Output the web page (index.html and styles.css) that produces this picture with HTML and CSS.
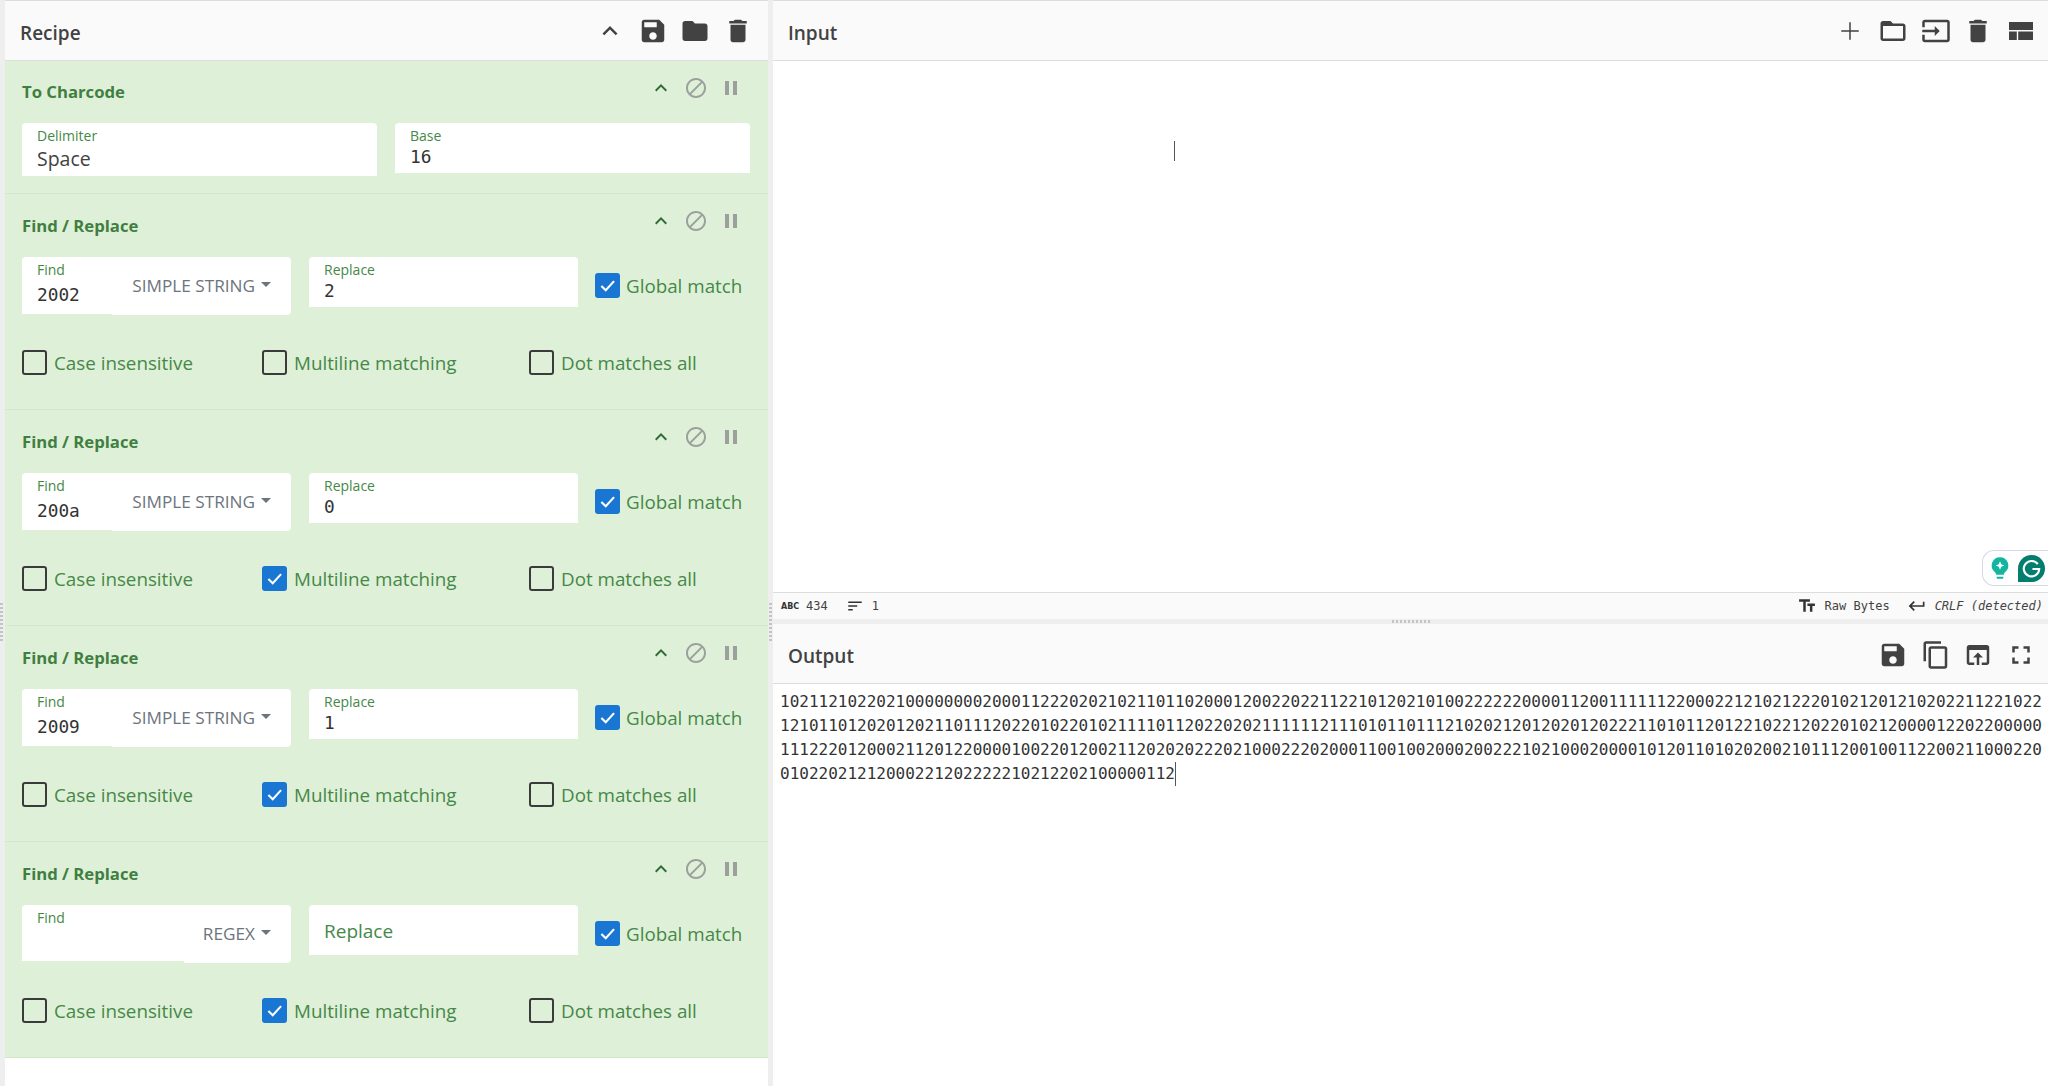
FILE: index.html
```html
<!DOCTYPE html>
<html lang="en">
<head>
<meta charset="utf-8">
<title>CyberChef</title>
<link rel="stylesheet" href="styles.css">
</head>
<body>
<svg class="defs" aria-hidden="true">
  <symbol id="i-up" viewBox="0 0 24 24"><path d="M7.41 15.41L12 10.83l4.59 4.58L18 14l-6-6-6 6z"/></symbol>
  <symbol id="i-save" viewBox="0 0 24 24"><path d="M17 3H5c-1.11 0-2 .9-2 2v14c0 1.1.89 2 2 2h14c1.1 0 2-.9 2-2V7l-4-4zm-5 16c-1.66 0-3-1.34-3-3s1.34-3 3-3 3 1.34 3 3-1.34 3-3 3zm3-10H5V5h10v4z"/></symbol>
  <symbol id="i-folder" viewBox="0 0 24 24"><path d="M10 4H4c-1.1 0-1.99.9-1.99 2L2 18c0 1.1.9 2 2 2h16c1.1 0 2-.9 2-2V8c0-1.1-.9-2-2-2h-8l-2-2z"/></symbol>
  <symbol id="i-folder-o" viewBox="0 0 24 24"><path d="M20 6h-8l-2-2H4c-1.1 0-1.99.9-1.99 2L2 18c0 1.1.9 2 2 2h16c1.1 0 2-.9 2-2V8c0-1.1-.9-2-2-2zm0 12H4V8h16v10z"/></symbol>
  <symbol id="i-delete" viewBox="0 0 24 24"><path d="M6 19c0 1.1.9 2 2 2h8c1.1 0 2-.9 2-2V7H6v12zM19 4h-3.5l-1-1h-5l-1 1H5v2h14V4z"/></symbol>
  <symbol id="i-block" viewBox="0 0 24 24"><path d="M12 2C6.48 2 2 6.48 2 12s4.48 10 10 10 10-4.48 10-10S17.52 2 12 2zM4 12c0-4.42 3.58-8 8-8 1.85 0 3.55.63 4.9 1.69L5.69 16.9C4.63 15.55 4 13.85 4 12zm8 8c-1.85 0-3.55-.63-4.9-1.69L18.31 7.1C19.37 8.45 20 10.15 20 12c0 4.42-3.58 8-8 8z"/></symbol>
  <symbol id="i-pause" viewBox="0 0 24 24"><path d="M6 19h4V5H6v14zm8-14v14h4V5h-4z"/></symbol>
  <symbol id="i-add" viewBox="0 0 24 24"><path d="M19 12.6h-6.4V19h-1.2v-6.4H5v-1.2h6.4V5h1.2v6.4H19z"/></symbol>
  <symbol id="i-input" viewBox="0 0 24 24"><path d="M21 3.01H3c-1.1 0-2 .9-2 2V9h2V4.99h18v14.03H3V15H1v4.01c0 1.1.9 1.98 2 1.98h18c1.1 0 2-.88 2-1.98v-14c0-1.11-.9-2-2-2zM11 16l4-4-4-4v3H1v2h10v3z"/></symbol>
  <symbol id="i-layout" viewBox="0 0 24 24"><path d="M0 3h24v8H0zM0 12.4h7.8V21H0zM9.2 12.4H24V21H9.2z"/></symbol>
  <symbol id="i-copy" viewBox="0 0 24 24"><path d="M16 1H4c-1.1 0-2 .9-2 2v14h2V3h12V1zm3 4H8c-1.1 0-2 .9-2 2v14c0 1.1.9 2 2 2h11c1.1 0 2-.9 2-2V7c0-1.1-.9-2-2-2zm0 16H8V7h11v14z"/></symbol>
  <symbol id="i-open" viewBox="0 0 24 24"><path d="M19 4H5c-1.11 0-2 .9-2 2v12c0 1.1.89 2 2 2h4v-2H5V8h14v10h-4v2h4c1.1 0 2-.9 2-2V6c0-1.1-.89-2-2-2zm-7 6l-4 4h3v6h2v-6h3l-4-4z"/></symbol>
  <symbol id="i-full" viewBox="0 0 24 24"><path d="M7 14H5v5h5v-2H7v-3zm-2-4h2V7h3V5H5v5zm12 7h-3v2h5v-5h-2v3zM14 5v2h3v3h2V5h-5z"/></symbol>
  <symbol id="i-text" viewBox="0 0 24 24"><path d="M2.5 4v3h5v12h3V7h5V4h-13zm19 5h-9v3h3v7h3v-7h3V9z"/></symbol>
  <symbol id="i-return" viewBox="0 0 24 24"><path d="M19 7v4H5.83l3.58-3.59L8 6l-6 6 6 6 1.41-1.41L5.83 13H21V7z"/></symbol>
  <symbol id="i-sort" viewBox="0 0 24 24"><path d="M3 18h6v-2H3v2zM3 6v2h18V6H3zm0 7h12v-2H3v2z"/></symbol>
  <symbol id="i-check" viewBox="0 0 24 24"><path d="M5 12.5l5 5L19.5 7" fill="none" stroke="#fff" stroke-width="2.4"/></symbol>
</svg>

<div class="app">
  <section class="recipe">
    <header class="bar">
      <h1 class="bar-title">Recipe</h1>
      <div class="bar-icons bar-icons-recipe">
        <button class="bar-btn"><svg class="icon"><use href="#i-up"/></svg></button>
        <button class="bar-btn"><svg class="icon"><use href="#i-save"/></svg></button>
        <button class="bar-btn"><svg class="icon"><use href="#i-folder"/></svg></button>
        <button class="bar-btn"><svg class="icon"><use href="#i-delete"/></svg></button>
      </div>
    </header>

    <article class="op op-first">
      <div class="op-head">
        <h2 class="op-title">To Charcode</h2>
        <div class="op-icons">
          <svg class="op-icon op-up"><use href="#i-up"/></svg>
          <svg class="op-icon"><use href="#i-block"/></svg>
          <svg class="op-icon"><use href="#i-pause"/></svg>
        </div>
      </div>
      <div class="args-two">
        <div class="field field-tall"><label class="field-label">Delimiter</label><div class="field-select">Space</div></div>
        <div class="field"><label class="field-label">Base</label><div class="field-value">16</div></div>
      </div>
    </article>

    <article class="op">
      <div class="op-head">
        <h2 class="op-title">Find / Replace</h2>
        <div class="op-icons">
          <svg class="op-icon op-up"><use href="#i-up"/></svg>
          <svg class="op-icon"><use href="#i-block"/></svg>
          <svg class="op-icon"><use href="#i-pause"/></svg>
        </div>
      </div>
      <div class="args-row">
        <div class="find">
          <div class="find-input"><label class="field-label">Find</label><div class="find-value">2002</div></div>
          <div class="find-type">SIMPLE STRING<span class="caret"></span></div>
        </div>
        <div class="field"><label class="field-label">Replace</label><div class="field-value">2</div></div>
        <label class="check check-global"><span class="box on"><svg class="tick"><use href="#i-check"/></svg></span>Global match</label>
      </div>
      <div class="checks">
        <label class="check c1"><span class="box"></span>Case insensitive</label>
        <label class="check c2"><span class="box"></span>Multiline matching</label>
        <label class="check c3"><span class="box"></span>Dot matches all</label>
      </div>
    </article>

    <article class="op">
      <div class="op-head">
        <h2 class="op-title">Find / Replace</h2>
        <div class="op-icons">
          <svg class="op-icon op-up"><use href="#i-up"/></svg>
          <svg class="op-icon"><use href="#i-block"/></svg>
          <svg class="op-icon"><use href="#i-pause"/></svg>
        </div>
      </div>
      <div class="args-row">
        <div class="find">
          <div class="find-input"><label class="field-label">Find</label><div class="find-value">200a</div></div>
          <div class="find-type">SIMPLE STRING<span class="caret"></span></div>
        </div>
        <div class="field"><label class="field-label">Replace</label><div class="field-value">0</div></div>
        <label class="check check-global"><span class="box on"><svg class="tick"><use href="#i-check"/></svg></span>Global match</label>
      </div>
      <div class="checks">
        <label class="check c1"><span class="box"></span>Case insensitive</label>
        <label class="check c2"><span class="box on"><svg class="tick"><use href="#i-check"/></svg></span>Multiline matching</label>
        <label class="check c3"><span class="box"></span>Dot matches all</label>
      </div>
    </article>

    <article class="op">
      <div class="op-head">
        <h2 class="op-title">Find / Replace</h2>
        <div class="op-icons">
          <svg class="op-icon op-up"><use href="#i-up"/></svg>
          <svg class="op-icon"><use href="#i-block"/></svg>
          <svg class="op-icon"><use href="#i-pause"/></svg>
        </div>
      </div>
      <div class="args-row">
        <div class="find">
          <div class="find-input"><label class="field-label">Find</label><div class="find-value">2009</div></div>
          <div class="find-type">SIMPLE STRING<span class="caret"></span></div>
        </div>
        <div class="field"><label class="field-label">Replace</label><div class="field-value">1</div></div>
        <label class="check check-global"><span class="box on"><svg class="tick"><use href="#i-check"/></svg></span>Global match</label>
      </div>
      <div class="checks">
        <label class="check c1"><span class="box"></span>Case insensitive</label>
        <label class="check c2"><span class="box on"><svg class="tick"><use href="#i-check"/></svg></span>Multiline matching</label>
        <label class="check c3"><span class="box"></span>Dot matches all</label>
      </div>
    </article>

    <article class="op">
      <div class="op-head">
        <h2 class="op-title">Find / Replace</h2>
        <div class="op-icons">
          <svg class="op-icon op-up"><use href="#i-up"/></svg>
          <svg class="op-icon"><use href="#i-block"/></svg>
          <svg class="op-icon"><use href="#i-pause"/></svg>
        </div>
      </div>
      <div class="args-row">
        <div class="find">
          <div class="find-input find-input-wide"><label class="field-label">Find</label></div>
          <div class="find-type find-type-narrow">REGEX<span class="caret"></span></div>
        </div>
        <div class="field"><div class="field-placeholder">Replace</div></div>
        <label class="check check-global"><span class="box on"><svg class="tick"><use href="#i-check"/></svg></span>Global match</label>
      </div>
      <div class="checks">
        <label class="check c1"><span class="box"></span>Case insensitive</label>
        <label class="check c2"><span class="box on"><svg class="tick"><use href="#i-check"/></svg></span>Multiline matching</label>
        <label class="check c3"><span class="box"></span>Dot matches all</label>
      </div>
    </article>
  </section>

  <div class="gutter-v"><span class="grip-v"></span></div>

  <main class="io">
    <header class="bar bar-input">
      <h1 class="bar-title">Input</h1>
      <div class="bar-icons bar-icons-io">
        <button class="bar-btn"><svg class="icon"><use href="#i-add"/></svg></button>
        <button class="bar-btn"><svg class="icon"><use href="#i-folder-o"/></svg></button>
        <button class="bar-btn"><svg class="icon"><use href="#i-input"/></svg></button>
        <button class="bar-btn"><svg class="icon"><use href="#i-delete"/></svg></button>
        <button class="bar-btn"><svg class="icon icon-layout"><use href="#i-layout"/></svg></button>
      </div>
    </header>
    <div class="input-body">
      <span class="input-cursor"></span>
      <div class="grammarly">
        <svg class="gr-bulb" viewBox="0 0 24 28"><path d="M12 1a10 10 0 0 0-6 18c1 .8 1.500 1.800 1.500 3h9c0-1.200.5-2.200 1.500-3A10 10 0 0 0 12 1z" fill="#13b5a0"/><path d="M8 24.500h8v1.500a1 1 0 0 1-1 1H9a1 1 0 0 1-1-1z" fill="#13b5a0"/><path d="M12 6l1.500 3.500L17 11l-3.500 1.500L12 16l-1.500-3.500L7 11l3.500-1.500z" fill="#fff"/></svg>
        <svg class="gr-g" viewBox="0 0 28 28"><path d="M14 0a14 14 0 0 1 14 14 14 14 0 0 1-14 14H0V14A14 14 0 0 1 14 0z" fill="#027e6f"/><path d="M20.500 9.500A8 8 0 1 0 22 14.500h-7" fill="none" stroke="#fff" stroke-width="2.200"/></svg>
      </div>
    </div>
    <footer class="status">
      <div class="status-group">
        <span class="abc">ABC</span><span class="stat-num">434</span>
        <svg class="st-icon st-sort"><use href="#i-sort"/></svg><span class="stat-num">1</span>
      </div>
      <div class="status-group status-right">
        <svg class="st-icon st-text"><use href="#i-text"/></svg><span class="stat-num">Raw Bytes</span>
        <svg class="st-icon st-return"><use href="#i-return"/></svg><em class="stat-em">CRLF (detected)</em>
      </div>
    </footer>
    <div class="gutter-h"><span class="grip-h"></span></div>
    <header class="bar bar-output">
      <h1 class="bar-title">Output</h1>
      <div class="bar-icons bar-icons-out">
        <button class="bar-btn"><svg class="icon"><use href="#i-save"/></svg></button>
        <button class="bar-btn"><svg class="icon"><use href="#i-copy"/></svg></button>
        <button class="bar-btn"><svg class="icon"><use href="#i-open"/></svg></button>
        <button class="bar-btn"><svg class="icon"><use href="#i-full"/></svg></button>
      </div>
    </header>
    <div class="output-body">
      <div class="out-line">10211210220210000000020001122202021021101102000120022022112210120210100222222000011200111111220002212102122201021201210202211221022</div>
      <div class="out-line">12101101202012021101112022010220102111101120220202111111211101011011121020212012020120222110101120122102212022010212000012202200000</div>
      <div class="out-line">11122201200021120122000010022012002112020202220210002220200011001002000200222102100020000101201101020200210111200100112200211000220</div>
      <div class="out-line out-last">01022021212000221202222210212202100000112</div>
    </div>
  </main>
</div>
</body>
</html>
```

FILE: styles.css
```css
* { box-sizing: border-box; }
html, body { margin: 0; padding: 0; height: 100%; }
body {
  background: #fff;
  color: #424242;
  font-family: "Open Sans", "Noto Sans", sans-serif;
  overflow: hidden;
}
.defs { position: absolute; width: 0; height: 0; }

.app {
  display: flex;
  height: 1086px;
  padding-left: 5px;
  background: #eee;
}

.recipe {
  width: 763px;
  flex: none;
  background: #fff;
  display: flex;
  flex-direction: column;
}

.bar {
  height: 61px;
  flex: none;
  display: flex;
  align-items: center;
  justify-content: space-between;
  background: #fafafa;
  border-top: 1px solid #ddd;
  border-bottom: 1px solid #ddd;
  padding: 0 9px 0 15px;
}
.bar-title {
  margin: 5px 0 0;
  font-size: 19px;
  line-height: 24px;
  font-weight: 600;
  color: #424242;
}
.bar-icons { display: flex; }
.bar-btn {
  width: 42px;
  height: 42px;
  padding: 0;
  border: 0;
  background: none;
  display: flex;
  align-items: center;
  justify-content: center;
}
.bar-icons-recipe .bar-btn { width: 42.500px; }
.icon { width: 30px; height: 30px; fill: #424242; }

.op {
  height: 216px;
  flex: none;
  padding: 0 17px;
  background: #dff0d8;
  border-bottom: 1px solid #d3e8c8;
}
.op-first { height: 133px; }
.op-head {
  height: 63px;
  display: flex;
  align-items: center;
  justify-content: space-between;
}
.op-first .op-head { height: 62px; }
.op-title {
  margin: 0;
  font-size: 16.700px;
  line-height: 24px;
  font-weight: 700;
  color: #3f7f41;
}
.op-icons {
  display: flex;
  gap: 11px;
  margin: -9px 8px 0 0;
}
.op-icon { width: 24px; height: 24px; fill: #9c9f9c; }
.op-up { fill: #2f6b35; }

.args-two {
  display: grid;
  grid-template-columns: 355px 355px;
  gap: 18px;
  align-items: start;
}
.args-row {
  display: flex;
  align-items: flex-start;
  height: 93px;
}
.field {
  background: #fff;
  height: 50px;
  width: 269px;
  margin-left: 18px;
  border-radius: 4px 4px 0 0;
  padding: 0 15px;
}
.args-two .field { width: 355px; margin-left: 0; }
.args-two .field-tall { height: 53px; }
.field-label {
  display: block;
  font-size: 14px;
  line-height: 16px;
  padding-top: 5px;
  height: 21px;
  color: #468847;
}
.field-select {
  font-size: 19.500px;
  line-height: 24px;
  padding-top: 3px;
  color: #424242;
}
.field-value, .find-value {
  font-family: "DejaVu Sans Mono", monospace;
  font-size: 17.800px;
  line-height: 22px;
  color: #333;
}
.field-value { padding-top: 2px; }
.field-placeholder {
  font-size: 19px;
  line-height: 50px;
  height: 50px;
  margin-top: 1px;
  color: #468847;
}

.find {
  width: 269px;
  flex: none;
  display: flex;
  align-items: flex-start;
}
.find-input {
  width: 90px;
  height: 57px;
  background: #fff;
  border-top-left-radius: 4px;
  padding: 0 0 0 15px;
}
.find-input-wide { width: 162px; height: 56px; }
.find-value { padding-top: 6px; }
.find-type {
  flex: 1;
  height: 58px;
  background: #fff;
  border-radius: 0 4px 4px 0;
  display: flex;
  align-items: center;
  justify-content: flex-end;
  padding: 0 20px 1px 0;
  font-size: 17.200px;
  color: #6c757d;
  white-space: nowrap;
}
.caret {
  width: 0;
  height: 0;
  margin-left: 6px;
  border-top: 5px solid #6c757d;
  border-left: 5px solid transparent;
  border-right: 5px solid transparent;
  margin-top: -3px;
}

.check {
  display: flex;
  align-items: center;
  gap: 7px;
  height: 25px;
  font-size: 18.800px;
  color: #468847;
  white-space: nowrap;
}
.check-global { margin: 16px 0 0 17px; gap: 6px; }
.box {
  width: 25px;
  height: 25px;
  flex: none;
  border: 2px solid #3b3b3b;
  border-radius: 3px;
  background: transparent;
  display: block;
}
.box.on { border: 0; background: #1976d2; padding: 2px; }
.tick { width: 21px; height: 21px; display: block; }
.checks {
  display: grid;
  grid-template-columns: 240px 267px auto;
}

.gutter-v {
  width: 5px;
  flex: none;
  background: #eee;
  position: relative;
}
.grip-v, .app::before {
  content: "";
  position: absolute;
  top: 603px;
  height: 38px;
  width: 3px;
  background-image: linear-gradient(#c4c4c4 50%, transparent 50%);
  background-size: 3px 4px;
}
.grip-v { left: 1px; }
.app::before { left: 0; }

.io {
  flex: 1;
  min-width: 0;
  display: flex;
  flex-direction: column;
  background: #fff;
}
.io .bar { padding: 0 5px 0 15px; }
.io .bar-input { padding-right: 6px; }
.bar-icons-io .bar-btn { width: 43px; }
.bar-icons-io .bar-btn:nth-child(n+3) { width: 42.500px; }
.bar-icons-out { margin-right: 1px; }
.bar-icons-out .bar-btn { width: 42.500px; margin-top: 2px; }
.icon-layout { width: 24px; height: 24px; }

.input-body {
  height: 531px;
  flex: none;
  position: relative;
  background: #fff;
}
.input-cursor {
  position: absolute;
  left: 401px;
  top: 80px;
  width: 1px;
  height: 20px;
  background: #555;
}
.grammarly {
  position: absolute;
  right: 0;
  bottom: 6px;
  width: 66px;
  height: 36px;
  background: #fff;
  border: 1px solid #d6d8e4;
  border-right: 0;
  border-radius: 12px 0 0 12px;
  display: flex;
  align-items: center;
  gap: 8px;
  padding-left: 7px;
}
.gr-bulb { width: 20px; height: 24px; flex: none; }
.gr-g { width: 27px; height: 27px; flex: none; }

.status {
  height: 27px;
  flex: none;
  background: #fafafa;
  border-top: 1px solid #ddd;
  display: flex;
  align-items: center;
  justify-content: space-between;
  padding: 0 5px 0 8px;
  font-family: "DejaVu Sans Mono", monospace;
  font-size: 12px;
  color: #424242;
}
.status-group { display: flex; align-items: center; }
.abc {
  font-family: "DejaVu Sans", sans-serif;
  font-size: 8px;
  font-weight: 700;
  width: 16px;
  margin-right: 9px;
  color: #333;
}
.stat-num { color: #424242; }
.stat-em { font-style: italic; }
.st-icon { width: 18px; height: 18px; fill: #333; }
.st-sort { margin: 0 8px 0 18px; }
.st-text { width: 20px; height: 20px; margin-right: 8px; }
.st-return { width: 20px; height: 20px; margin: 0 8px 0 17px; }

.gutter-h {
  height: 5px;
  flex: none;
  background: #eee;
  display: flex;
  justify-content: center;
  align-items: center;
}
.grip-h {
  width: 38px;
  height: 3px;
  background-image: linear-gradient(90deg, #c4c4c4 50%, transparent 50%);
  background-size: 4px 3px;
}
.bar-output { border-top: 0; height: 60px; }

.output-body {
  flex: 1;
  padding: 6px 0 0 7px;
  background: #fff;
  font-family: "DejaVu Sans Mono", monospace;
  font-size: 16px;
  line-height: 24px;
  color: #333;
}
.out-line { white-space: pre; }
.out-last {
  width: fit-content;
  border-right: 1px solid #555;
}
```
